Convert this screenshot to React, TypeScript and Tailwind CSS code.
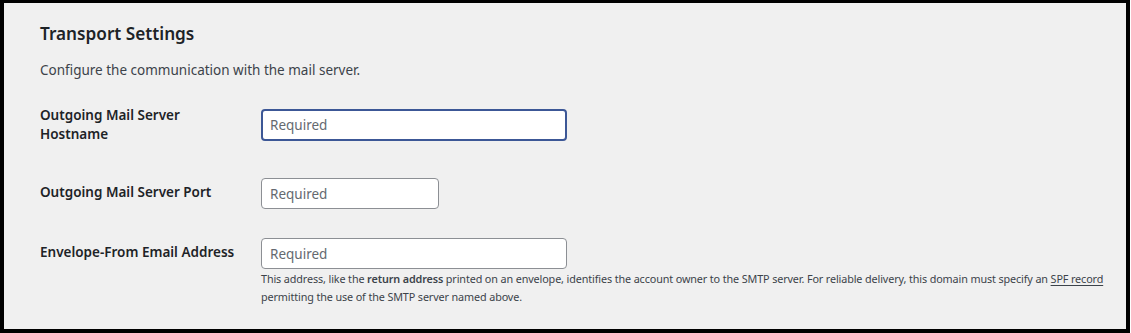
import React from 'react'

const font = { fontFamily: '"Noto Sans", "Open Sans", sans-serif' }

function Field({
  label,
  width,
  focused,
  labelPad,
  children,
}: {
  label: string
  width: string
  focused?: boolean
  labelPad: string
  children?: React.ReactNode
}) {
  return (
    <div className="flex items-start">
      <div className={`w-[210px] shrink-0 pr-[10px] text-[13.5px] font-semibold leading-[19px] text-[#1d2327] ${labelPad}`}>
        {label}
      </div>
      <div className="flex-1 pl-[11px]">
        <input
          placeholder="Required"
          className={`${width} rounded-[4px] bg-white px-[8px] text-[13.5px] text-[#2c3338] placeholder:text-[#646970] outline-none ${
            focused
              ? 'mt-[3px] h-[32px] border-2 border-[#3c5796] pl-[7px]'
              : 'h-[31px] border border-[#8c8f94]'
          }`}
        />
        {children}
      </div>
    </div>
  )
}

export default function App() {
  return (
    <div className="w-[1131px] h-[333px] bg-white" style={font}>
      <div className="w-[1130px] h-[333px] border-t-[3px] border-l-4 border-r-4 border-b-4 border-black bg-[#f0f0f0] pl-[36px]">
        <h2 className="pt-[19px] text-[17.2px] font-semibold leading-[24px] text-[#1d2327]">Transport Settings</h2>
        <p className="mt-[14px] text-[13.5px] leading-[20px] text-[#3c434a]">Configure the communication with the mail server.</p>

        <div className="mt-[26px]">
          <Field label="Outgoing Mail Server Hostname" width="w-[306px]" focused labelPad="pt-0" />
        </div>
        <div className="mt-[34px]">
          <Field label="Outgoing Mail Server Port" width="w-[178px]" labelPad="pt-[5px]" />
        </div>
        <div className="mt-[29px]">
          <Field label="Envelope-From Email Address" width="w-[306px]" labelPad="pt-[5px]">
            <p className="mt-[1px] text-[10.8px] leading-[18px] tracking-[-0.12px] text-[#3c434a]">
              This address, like the <b className="font-semibold">return address</b> printed on an envelope, identifies the
              account owner to the SMTP server. For reliable delivery, this domain must specify an{' '}
              <a href="#" className="whitespace-nowrap underline underline-offset-2">SPF record</a> permitting the use of the SMTP server named above.
            </p>
          </Field>
        </div>
      </div>
    </div>
  )
}
